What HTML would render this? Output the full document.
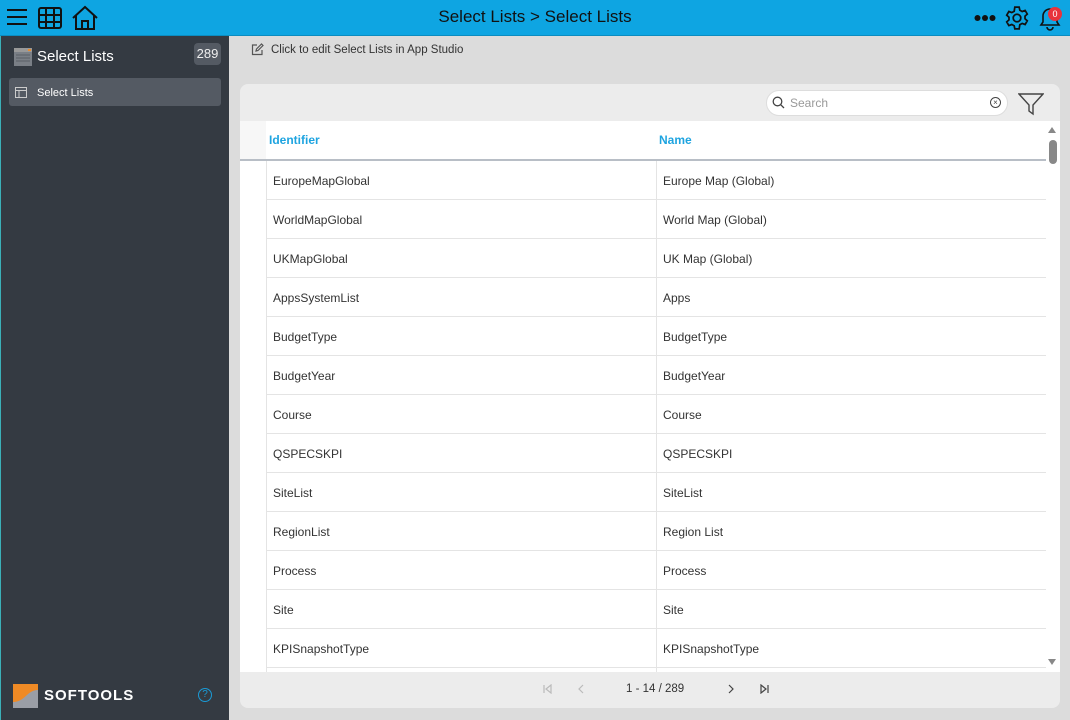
<!DOCTYPE html>
<html><head><meta charset="utf-8"><style>
*{box-sizing:border-box;margin:0;padding:0}
body{width:1070px;height:720px;overflow:hidden;background:#dcdcdc;font-family:"Liberation Sans",sans-serif;position:relative}
.top{position:absolute;left:0;top:0;width:1070px;height:36px;background:#0ea5e2;border-bottom:1px solid #0b8cc0}
.title{position:absolute;left:0;right:0;top:7px;text-align:center;font-size:17px;color:#111}
.side{position:absolute;left:0;top:36px;width:229px;height:684px;background:#343a42;border-left:1px solid #3bb0b8}
.abs{position:absolute}
.card{position:absolute;left:240px;top:84px;width:820px;height:624px;background:#ececec;border-radius:8px;overflow:hidden}
.tbl{position:absolute;left:0;top:37px;width:820px;height:551px;background:#fff;overflow:hidden}
.row{position:absolute;left:26px;width:780px;height:39px;border-bottom:1px solid #e4e4e4;font-size:12px;color:#333}
.row div{position:absolute;top:0;height:39px;line-height:40px;padding-left:6px;border-left:1px solid #e4e4e4}
</style></head><body>
<div class="top">
<svg class="abs" style="left:6px;top:6px" width="22" height="22" viewBox="0 0 22 22" stroke="#111" stroke-width="2"><path d="M1 4H21M1 11H21M1 18H21"/></svg>
<svg class="abs" style="left:38px;top:7px" width="24" height="22" viewBox="0 0 24 22" fill="none" stroke="#111" stroke-width="2"><rect x="1" y="1" width="22" height="20" rx="2"/><path d="M8 1V21M16 1V21M1 8H23M1 15H23"/></svg>
<svg class="abs" style="left:71px;top:5px" width="28" height="26" viewBox="0 0 28 26" fill="none" stroke="#111" stroke-width="2"><path d="M2 13L14 2L26 13M5 10V24H23V10M11 24V16H17V24"/></svg>
<div class="title">Select Lists &gt; Select Lists</div>
<svg class="abs" style="left:974px;top:14px" width="22" height="8" viewBox="0 0 22 8" fill="#111"><circle cx="3.5" cy="4" r="3"/><circle cx="11" cy="4" r="3"/><circle cx="18.5" cy="4" r="3"/></svg>
<svg class="abs" style="left:1004px;top:5px" width="26" height="26" viewBox="0 0 24 24" fill="none" stroke="#111" stroke-width="1.6"><circle cx="12" cy="12" r="3.5"/><path d="M10 2h4l.6 2.8 2.2 1.2 2.7-1 2 3.4-2.1 1.9v2.4l2.1 1.9-2 3.4-2.7-1-2.2 1.2L14 22h-4l-.6-2.8-2.2-1.2-2.7 1-2-3.4 2.1-1.9V11.3L2.5 9.4l2-3.4 2.7 1 2.2-1.2z"/></svg>
<svg class="abs" style="left:1038px;top:6px" width="24" height="25" viewBox="0 0 24 25" fill="none" stroke="#111" stroke-width="1.6"><path d="M3 19H21L19 16V10A7 7 0 0 0 5 10V16Z M9 21A3 3 0 0 0 15 21"/></svg>
<div class="abs" style="left:1048px;top:7px;width:14px;height:14px;border-radius:7px;background:#e8333c;color:#fff;font-size:9px;text-align:center;line-height:14px">0</div>
</div>
<div class="side">
<svg class="abs" style="left:12px;top:11px" width="20" height="20" viewBox="0 0 20 20"><rect x="1" y="1" width="18" height="18" fill="#7a7f86"/><rect x="1" y="1" width="18" height="4" fill="#999"/><rect x="15" y="2" width="3" height="2" fill="#e98a2b"/><path d="M3 8H17M3 11H17M3 14H17" stroke="#5a5f66"/></svg>
<div class="abs" style="left:36px;top:12px;font-size:15px;color:#fff">Select Lists</div>
<div class="abs" style="left:193px;top:7px;width:27px;height:22px;border-radius:4px;background:#545a63;color:#eee;font-size:13px;text-align:center;line-height:22px">289</div>
<div class="abs" style="left:8px;top:42px;width:212px;height:28px;border-radius:3px;background:#545a63"></div>
<svg class="abs" style="left:14px;top:51px" width="12" height="11" viewBox="0 0 12 11" fill="none" stroke="#ccc"><rect x=".5" y=".5" width="11" height="10"/><path d="M.5 3.5H11.5M4 3.5V10.5"/></svg>
<div class="abs" style="left:36px;top:51px;font-size:11px;color:#fff">Select Lists</div>
<div class="abs" style="left:12px;top:648px;width:25px;height:24px;background:#9a9ea6;overflow:hidden"><svg width="25" height="24"><path d="M0 0H25V6C14 6 12 18 0 18Z" fill="#ef8a25"/></svg></div>
<div class="abs" style="left:43px;top:651px;font-size:15px;font-weight:bold;color:#fff;letter-spacing:1px">SOFTOOLS</div>
<div class="abs" style="left:197px;top:652px;width:14px;height:14px;border:1.5px solid #1a9ad6;border-radius:50%;color:#1a9ad6;font-size:10px;text-align:center;line-height:12px">?</div>
</div>
<svg class="abs" style="left:251px;top:43px" width="13" height="13" viewBox="0 0 13 13" fill="none" stroke="#555" stroke-width="1.2"><path d="M6 2H1.5V11.5H11V7M5 8L5.5 6L10.5 1L12 2.5L7 7.5Z"/></svg>
<div class="abs" style="left:271px;top:44px;font-size:11.5px;color:#333">Click to edit Select Lists in App Studio</div>
<div class="card">
<div class="abs" style="left:526px;top:6px;width:242px;height:26px;border-radius:13px;background:#fff;border:1px solid #ddd"></div>
<svg class="abs" style="left:532px;top:12px" width="13" height="13" viewBox="0 0 13 13" fill="none" stroke="#444" stroke-width="1.3"><circle cx="5.5" cy="5.5" r="4.3"/><path d="M8.7 8.7L12 12"/></svg>
<div class="abs" style="left:550px;top:12px;font-size:12px;color:#999">Search</div>
<div class="abs" style="left:750px;top:13px;width:11px;height:11px;border:1px solid #444;border-radius:50%;font-size:8px;line-height:9px;text-align:center;color:#444">×</div>
<svg class="abs" style="left:778px;top:8px" width="26" height="24" viewBox="0 0 26 24" fill="none" stroke="#444" stroke-width="1.4"><path d="M1 2H25L15 13V22L11 19V13Z"/></svg>
<div class="tbl">
<div class="abs" style="left:0;top:0;width:26px;height:38px;background:#f7f7f7"></div>
<div class="abs" style="left:29px;top:12px;font-size:12px;font-weight:bold;color:#1ea4e0">Identifier</div>
<div class="abs" style="left:419px;top:12px;font-size:12px;font-weight:bold;color:#1ea4e0">Name</div>
<div class="abs" style="left:0;top:38px;width:806px;height:2px;background:#b8bec6"></div>
<div class="abs" style="left:808px;top:6px;width:0;height:0;border:4px solid transparent;border-bottom:6px solid #888;border-top:0"></div>
<div class="abs" style="left:809px;top:19px;width:8px;height:24px;border-radius:4px;background:#888"></div>
<div class="abs" style="left:808px;top:538px;width:0;height:0;border:4px solid transparent;border-top:6px solid #888;border-bottom:0"></div>
<div class="row" style="top:40px"><div style="left:0;width:390px">EuropeMapGlobal</div><div style="left:390px;width:390px">Europe Map (Global)</div></div>
<div class="row" style="top:79px"><div style="left:0;width:390px">WorldMapGlobal</div><div style="left:390px;width:390px">World Map (Global)</div></div>
<div class="row" style="top:118px"><div style="left:0;width:390px">UKMapGlobal</div><div style="left:390px;width:390px">UK Map (Global)</div></div>
<div class="row" style="top:157px"><div style="left:0;width:390px">AppsSystemList</div><div style="left:390px;width:390px">Apps</div></div>
<div class="row" style="top:196px"><div style="left:0;width:390px">BudgetType</div><div style="left:390px;width:390px">BudgetType</div></div>
<div class="row" style="top:235px"><div style="left:0;width:390px">BudgetYear</div><div style="left:390px;width:390px">BudgetYear</div></div>
<div class="row" style="top:274px"><div style="left:0;width:390px">Course</div><div style="left:390px;width:390px">Course</div></div>
<div class="row" style="top:313px"><div style="left:0;width:390px">QSPECSKPI</div><div style="left:390px;width:390px">QSPECSKPI</div></div>
<div class="row" style="top:352px"><div style="left:0;width:390px">SiteList</div><div style="left:390px;width:390px">SiteList</div></div>
<div class="row" style="top:391px"><div style="left:0;width:390px">RegionList</div><div style="left:390px;width:390px">Region List</div></div>
<div class="row" style="top:430px"><div style="left:0;width:390px">Process</div><div style="left:390px;width:390px">Process</div></div>
<div class="row" style="top:469px"><div style="left:0;width:390px">Site</div><div style="left:390px;width:390px">Site</div></div>
<div class="row" style="top:508px"><div style="left:0;width:390px">KPISnapshotType</div><div style="left:390px;width:390px">KPISnapshotType</div></div>
<div class="row" style="top:547px"><div style="left:0;width:390px"></div><div style="left:390px;width:390px"></div></div>
</div>
<svg class="abs" style="left:303px;top:600px" width="9" height="10" viewBox="0 0 9 10" fill="none" stroke="#bbb" stroke-width="1.2"><path d="M1 1V9M8 1L3 5L8 9Z"/></svg>
<svg class="abs" style="left:338px;top:600px" width="6" height="10" viewBox="0 0 6 10" fill="none" stroke="#bbb" stroke-width="1.2"><path d="M5 1L1 5L5 9"/></svg>
<div class="abs" style="left:386px;top:599px;font-size:11.5px;color:#333">1 - 14 / 289</div>
<svg class="abs" style="left:488px;top:600px" width="6" height="10" viewBox="0 0 6 10" fill="none" stroke="#444" stroke-width="1.2"><path d="M1 1L5 5L1 9"/></svg>
<svg class="abs" style="left:520px;top:600px" width="9" height="10" viewBox="0 0 9 10" fill="none" stroke="#444" stroke-width="1.2"><path d="M8 1V9M1 1L6 5L1 9Z"/></svg>
</div>
</body></html>
